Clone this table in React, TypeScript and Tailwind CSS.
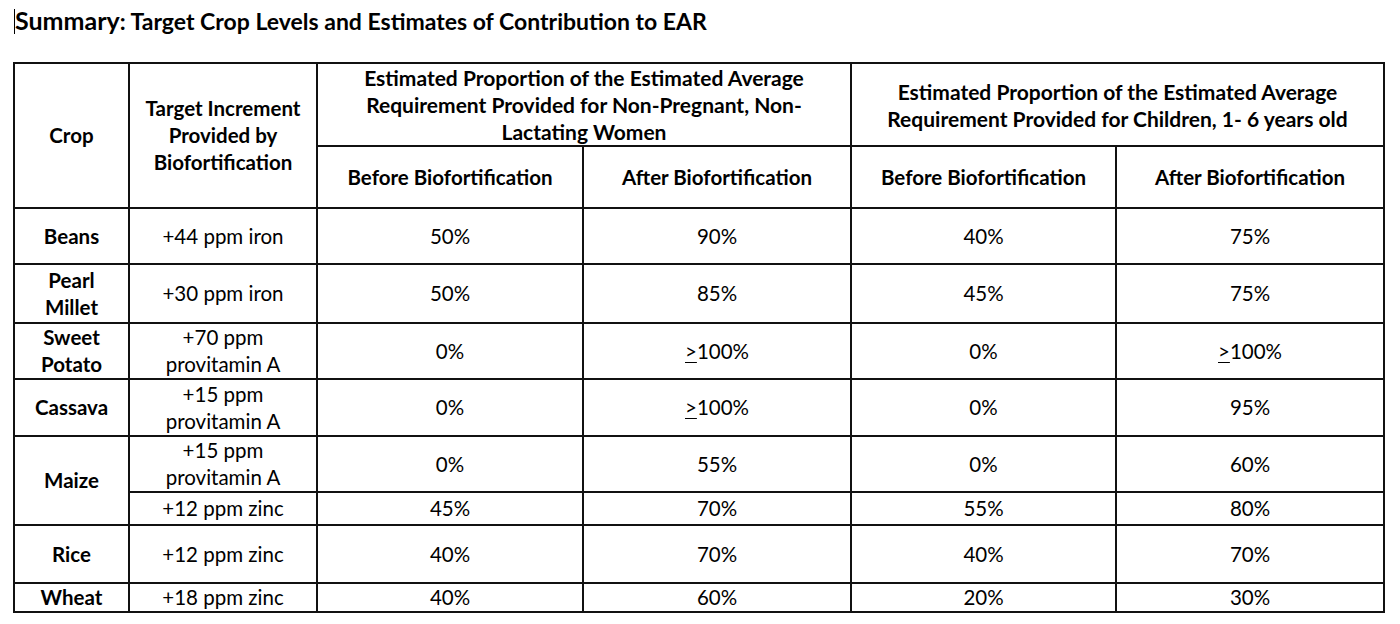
const rows: {
  crop: string[];
  span?: number;
  inc: string[];
  vals: string[];
  h: string;
}[] = [
  { crop: ["Beans"], inc: ["+44 ppm iron"], vals: ["50%", "90%", "40%", "75%"], h: "h-[56px]" },
  { crop: ["Pearl", "Millet"], inc: ["+30 ppm iron"], vals: ["50%", "85%", "45%", "75%"], h: "h-[59px]" },
  { crop: ["Sweet", "Potato"], inc: ["+70 ppm", "provitamin A"], vals: ["0%", "≥100%", "0%", "≥100%"], h: "h-[55px]" },
  { crop: ["Cassava"], inc: ["+15 ppm", "provitamin A"], vals: ["0%", "≥100%", "0%", "95%"], h: "h-[57px]" },
  { crop: ["Maize"], span: 2, inc: ["+15 ppm", "provitamin A"], vals: ["0%", "55%", "0%", "60%"], h: "h-[55px]" },
  { crop: [], inc: ["+12 ppm zinc"], vals: ["45%", "70%", "55%", "80%"], h: "h-[33px]" },
  { crop: ["Rice"], inc: ["+12 ppm zinc"], vals: ["40%", "70%", "40%", "70%"], h: "h-[58px]" },
  { crop: ["Wheat"], inc: ["+18 ppm zinc"], vals: ["40%", "60%", "20%", "30%"], h: "h-[26px]" },
];

function Val({ v }: { v: string }) {
  if (v.startsWith("≥")) {
    return (
      <span>
        <span className="underline decoration-1 underline-offset-[3px]">&gt;</span>
        {v.slice(1)}
      </span>
    );
  }
  return <span>{v}</span>;
}

function Lines({ lines }: { lines: string[] }) {
  return (
    <>
      {lines.map((l, i) => (
        <div key={i}>{l}</div>
      ))}
    </>
  );
}

const cell = "border-2 border-[#111] p-0 text-center align-middle";

export default function App() {
  return (
    <div className="min-h-[624px] w-[1400px] bg-white font-['Lato',sans-serif] text-black">
      <div className="flex h-[62px] items-start pl-[14px] pt-[6px]">
        <span className="mt-[3px] h-[25px] w-px bg-black" />
        <h1 className="whitespace-nowrap text-[23px] font-bold leading-[29px]">
          <span className="text-[25px]">Summary</span>: Target Crop Levels and Estimates of Contribution to EAR
        </h1>
      </div>
      <table className="ml-[13px] w-[1370px] table-fixed border-collapse text-[20.5px] leading-[27px]">
        <colgroup>
          <col className="w-[115px]" />
          <col className="w-[188px]" />
          <col className="w-[266px]" />
          <col className="w-[268px]" />
          <col className="w-[265px]" />
          <col className="w-[268px]" />
        </colgroup>
        <thead className="font-bold">
          <tr className="h-[83px]">
            <th rowSpan={2} className={cell}>
              Crop
            </th>
            <th rowSpan={2} className={cell}>
              <Lines lines={["Target Increment", "Provided by", "Biofortification"]} />
            </th>
            <th colSpan={2} className={`${cell} text-[21px]`}>
              <Lines
                lines={[
                  "Estimated Proportion of the Estimated Average",
                  "Requirement Provided for Non-Pregnant, Non-",
                  "Lactating Women",
                ]}
              />
            </th>
            <th colSpan={2} className={`${cell} text-[21px]`}>
              <Lines
                lines={[
                  "Estimated Proportion of the Estimated Average",
                  "Requirement Provided for Children, 1- 6 years old",
                ]}
              />
            </th>
          </tr>
          <tr className="h-[62px]">
            <th className={cell}>Before Biofortification</th>
            <th className={cell}>After Biofortification</th>
            <th className={cell}>Before Biofortification</th>
            <th className={cell}>After Biofortification</th>
          </tr>
        </thead>
        <tbody>
          {rows.map((r, i) => (
            <tr key={i} className={r.h}>
              {r.crop.length > 0 && (
                <td rowSpan={r.span ?? 1} className={`${cell} font-bold`}>
                  <Lines lines={r.crop} />
                </td>
              )}
              <td className={cell}>
                <Lines lines={r.inc} />
              </td>
              {r.vals.map((v, j) => (
                <td key={j} className={cell}>
                  <Val v={v} />
                </td>
              ))}
            </tr>
          ))}
        </tbody>
      </table>
    </div>
  );
}
